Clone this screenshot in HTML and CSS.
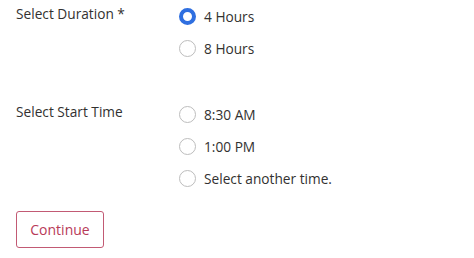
FILE: index.html
```html
<!DOCTYPE html>
<html>
<head>
<meta charset="utf-8">
<link rel="stylesheet" href="styles.css">
</head>
<body>
<form class="form">
  <div class="group">
    <div class="label">Select Duration *</div>
    <div class="options">
      <label class="opt"><span class="radio checked"></span><span>4 Hours</span></label>
      <label class="opt"><span class="radio"></span><span>8 Hours</span></label>
    </div>
  </div>
  <div class="group group2">
    <div class="label">Select Start Time</div>
    <div class="options">
      <label class="opt"><span class="radio"></span><span>8:30 AM</span></label>
      <label class="opt"><span class="radio"></span><span>1:00 PM</span></label>
      <label class="opt"><span class="radio"></span><span>Select another time.</span></label>
    </div>
  </div>
  <button type="button" class="btn">Continue</button>
</form>
</body>
</html>
```
FILE: styles.css
```css
html, body {
  margin: 0;
  padding: 0;
  background: #ffffff;
}
body {
  font-family: "Open Sans", "Noto Sans", sans-serif;
  font-size: 13.7px;
  color: #323130;
}
.form {
  padding: 0 0 0 16px;
  display: flex;
  flex-direction: column;
  align-items: flex-start;
}
.group {
  display: grid;
  grid-template-columns: 163px auto;
}
.group2 {
  margin-top: 34px;
}
.label {
  height: 32px;
  line-height: 28px;
}
.options {
  display: flex;
  flex-direction: column;
}
.opt {
  height: 32px;
  display: flex;
  align-items: center;
  gap: 8px;
}
.radio {
  box-sizing: border-box;
  width: 17px;
  height: 17px;
  border-radius: 50%;
  border: 1px solid #bdbdbd;
  background: #fff;
}
.radio.checked {
  border: 4.5px solid #2f6fe0;
  background: #fff;
}
.btn {
  margin-top: 17px;
  box-sizing: border-box;
  width: 88px;
  height: 37px;
  border: 1px solid #c25a74;
  border-radius: 3px;
  background: #fff;
  color: #b83a58;
  font-family: inherit;
  font-size: 14px;
  padding: 0;
}
```
